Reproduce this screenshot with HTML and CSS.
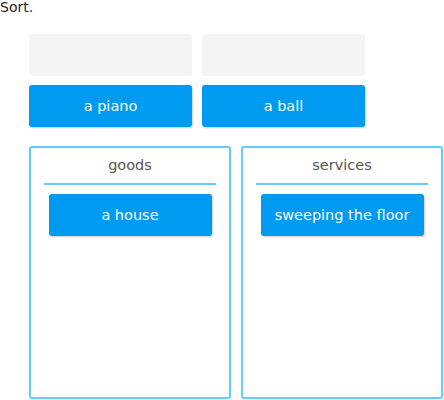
FILE: index.html
```html
<!DOCTYPE html>
<html lang="en">
<head>
    <meta charset="UTF-8">
    <title>Sort</title>
    <link rel="stylesheet" href="styles.css">
</head>
<body>
    <p class="prompt">Sort.</p>
    <div class="sorter">
        <!-- empty drop slots -->
        <div class="row">
            <div class="slot"></div>
            <div class="slot"></div>
        </div>
        <!-- cards still to sort -->
        <div class="row">
            <div class="card">a piano</div>
            <div class="card">a ball</div>
        </div>
        <div class="bins">
            <div class="bin">
                <div class="bin-title">goods</div>
                <div class="card">a house</div>
            </div>
            <div class="bin">
                <div class="bin-title">services</div>
                <div class="card">sweeping the floor</div>
            </div>
        </div>
    </div>
</body>
</html>
```

FILE: styles.css
```css
body {
    margin: 0;
    font-family: "DejaVu Sans", Verdana, sans-serif;
    font-size: 14px;
    color: #222;
    background-color: #fff;
    overflow: hidden;
}
.prompt {
    margin: 0;
    line-height: 14px;
    height: 34px;
}
.sorter {
    padding-left: 29px;
}
.row {
    display: grid;
    grid-template-columns: 163px 163px;
    column-gap: 10px;
    margin-bottom: 9px;
}
.slot {
    height: 42px;
    background-color: #f4f4f4;
    border-radius: 3px;
}
.card {
    width: 163px;
    height: 42px;
    display: flex;
    align-items: center;
    justify-content: center;
    background-color: #009bf0;
    color: #fff;
    font-size: 14.5px;
    border-radius: 3px;
    box-shadow: 1px 1px 2px rgba(0, 0, 0, 0.2);
}
.bins {
    display: flex;
    gap: 10px;
    margin-top: 19px;
}
.bin {
    width: 198px;
    height: 249px;
    border: 2px solid #66ccff;
    border-radius: 3px;
    display: flex;
    flex-direction: column;
    align-items: center;
}
.bin-title {
    align-self: stretch;
    margin: 0 13px 9px;
    padding: 9px 0 10px;
    text-align: center;
    color: #555;
    font-size: 14.5px;
    border-bottom: 2px solid #66ccff;
}
```
